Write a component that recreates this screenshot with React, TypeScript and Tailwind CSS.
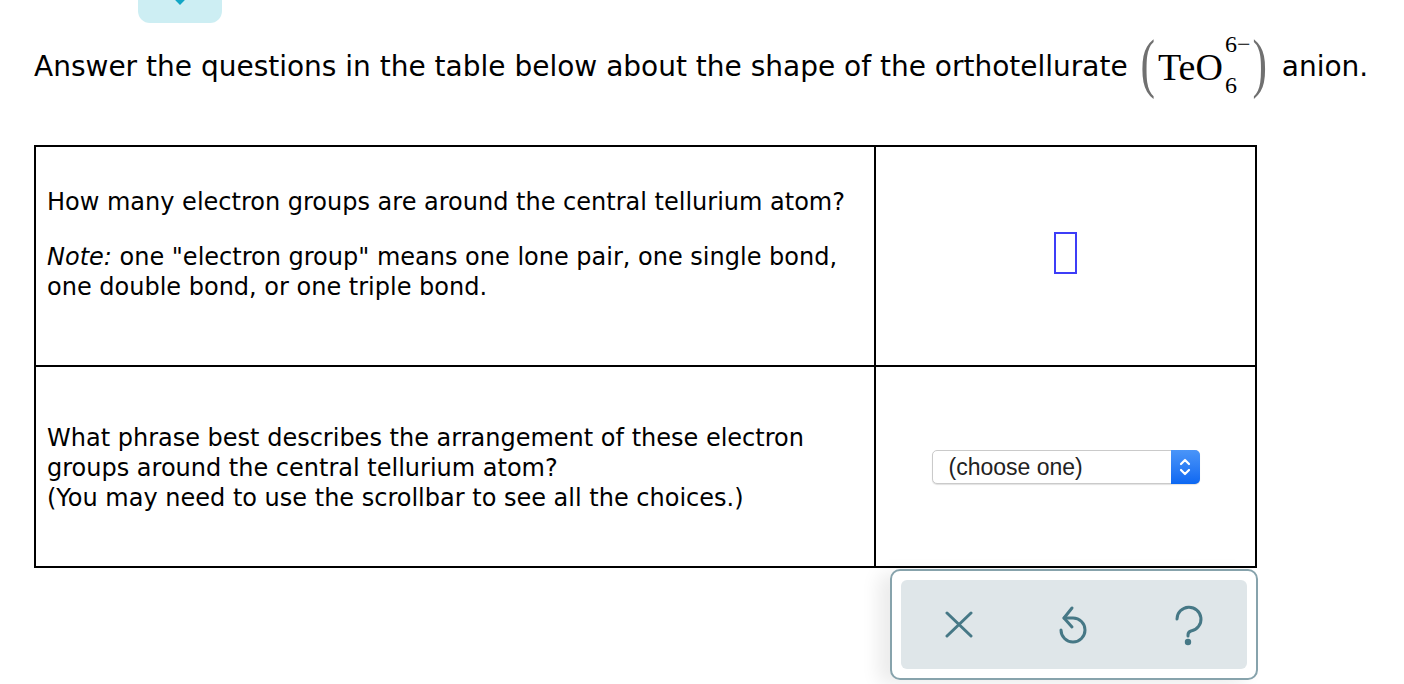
import React from 'react';

/**
 * Question table: shape of the orthotellurate anion
 */

const sans = { fontFamily: '"DejaVu Sans", Verdana, sans-serif' };
const serif = { fontFamily: '"Liberation Serif", "Times New Roman", serif' };

function Formula() {
  return (
    <span className="inline-flex items-center ml-[10px] mr-[12px]" style={serif}>
      <span className="text-[58px] leading-none text-[#707070] font-light scale-x-[0.75] scale-y-[1.12] -mt-[6px]">(</span>
      <span className="text-[38px] leading-none text-black ml-[1px]">TeO</span>
      <span className="flex flex-col items-start text-[24px] leading-none text-black ml-[2px] -mt-[6px]">
        <span className="mb-[17px]">6−</span>
        <span>6</span>
      </span>
      <span className="text-[58px] leading-none text-[#707070] font-light scale-x-[0.75] scale-y-[1.12] -mt-[6px]">)</span>
    </span>
  );
}

function SelectBox() {
  return (
    <div className="relative w-[268px] h-[34px] rounded-[5px] border border-[#cacaca] bg-white shadow-[0_1px_1px_rgba(0,0,0,0.12)] flex items-center">
      <span
        className="pl-[16px] text-[23px] text-[#222]"
        style={{ fontFamily: '"Liberation Sans", Arial, sans-serif' }}
      >
        (choose one)
      </span>
      <div className="absolute right-[-1px] top-[-1px] w-[29px] h-[34px] rounded-r-[5px] bg-gradient-to-b from-[#4a95f8] to-[#0b67f2] flex items-center justify-center">
        <svg width="14" height="22" viewBox="0 0 14 22" fill="none" stroke="white" strokeWidth="2.2" strokeLinecap="round" strokeLinejoin="round">
          <path d="M3 8 L7 4 L11 8" />
          <path d="M3 14 L7 18 L11 14" />
        </svg>
      </div>
    </div>
  );
}

function ToolIcons() {
  const stroke = '#467886';
  return (
    <div className="grid grid-cols-3 h-full items-center">
      <div className="flex justify-center">
        <svg width="28" height="28" viewBox="0 0 28 28" fill="none" stroke={stroke} strokeWidth="3" strokeLinecap="round">
          <path d="M2 2 L26 25 M26 2 L2 25" />
        </svg>
      </div>
      <div className="flex justify-center">
        <svg width="30" height="42" viewBox="0 0 30 42" fill="none" stroke={stroke} strokeWidth="3" strokeLinecap="round" strokeLinejoin="round">
          <path d="M13 4 L5 14 L13 23" />
          <path d="M5 14 H14 A12 12 0 1 1 2 26" />
        </svg>
      </div>
      <div className="flex justify-center">
        <svg width="30" height="42" viewBox="0 0 30 42" fill="none" stroke={stroke} strokeWidth="3" strokeLinecap="round" strokeLinejoin="round">
          <path d="M3 15 A12 12 0 1 1 17 27 Q14 28 14 31 V32" />
          <circle cx="14" cy="38" r="1.7" fill={stroke} />
        </svg>
      </div>
    </div>
  );
}

export default function App() {
  return (
    <div className="w-[1404px] h-[684px] overflow-hidden bg-white pl-[34px] text-black" style={sans}>
      {/* Collapsed tab at top */}
      <div className="relative ml-[104px] w-[84px] h-[23px] rounded-b-[12px] bg-[#cdeef3] overflow-hidden">
        <div className="absolute left-[35px] top-[-12px] w-[14px] h-[14px] rotate-45 bg-[#13a6c5]" />
      </div>

      {/* Prompt */}
      <div className="mt-[11px] h-[66px] flex items-center text-[28px] whitespace-nowrap">
        <span>Answer the questions in the table below about the shape of the orthotellurate</span>
        <Formula />
        <span>anion.</span>
      </div>

      {/* Table */}
      <div className="mt-[45px] w-[1223px] border-2 border-black grid grid-cols-[840px_1fr] text-[24px] leading-[30px]">
        <div className="h-[220px] border-r-2 border-b-2 border-black pl-[11px] pt-[40px]">
          <p>How many electron groups are around the central tellurium atom?</p>
          <p className="mt-[25px]">
            <i>Note:</i> one "electron group" means one lone pair, one single bond,
            <br />
            one double bond, or one triple bond.
          </p>
        </div>
        <div className="h-[220px] border-b-2 border-black flex items-center justify-center pb-[6px]">
          <div className="w-[23px] h-[42px] border-2 border-[#3d3df7]" />
        </div>
        <div className="h-[199px] border-r-2 border-black pl-[11px] pt-[56px]">
          <p>What phrase best describes the arrangement of these electron</p>
          <p>groups around the central tellurium atom?</p>
          <p>(You may need to use the scrollbar to see all the choices.)</p>
        </div>
        <div className="h-[199px] flex items-center justify-center">
          <SelectBox />
        </div>
      </div>

      {/* Tool panel */}
      <div className="mt-[1px] ml-[856px] w-[368px] h-[111px] rounded-[10px] border-2 border-[#87a3ac] bg-white p-[9px] shadow-[-12px_4px_18px_rgba(0,0,0,0.08)]">
        <div className="h-full rounded-[6px] bg-[#dfe6e9]">
          <ToolIcons />
        </div>
      </div>
    </div>
  );
}
